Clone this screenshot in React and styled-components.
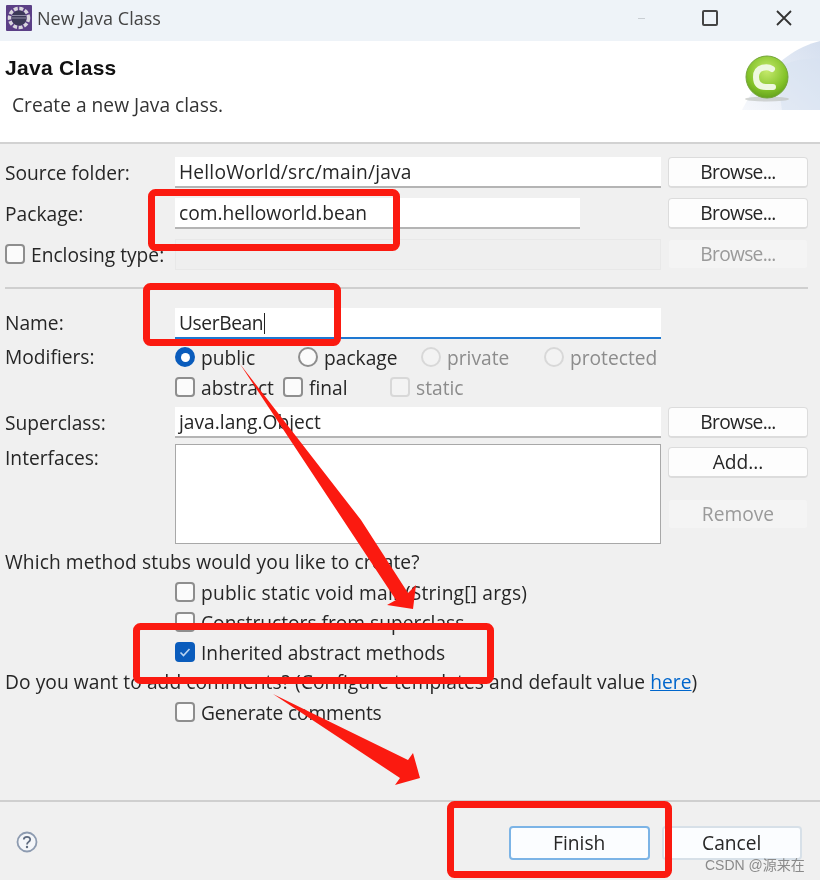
import React from 'react';
import styled, { createGlobalStyle } from 'styled-components';

const GlobalStyle = createGlobalStyle`
  html, body {
    margin: 0;
    padding: 0;
    background: #f0f0f0;
  }
`;

const FONT = '"Open Sans", "Noto Sans", sans-serif';

const Page = styled.div`
  position: relative;
  display: flex;
  flex-direction: column;
  width: 820px;
  height: 880px;
  overflow: hidden;
  background: #f0f0f0;
  color: #262626;
  font-family: ${FONT};
  font-size: 19.2px;
  filter: blur(0.45px);
`;

const TitleBar = styled.div`
  box-sizing: border-box;
  display: flex;
  align-items: center;
  height: 41px;
  padding: 0 0 5px 6px;
  background: #eef3f8;
  color: #444;
  flex: none;
`;

const TitleText = styled.span`
  margin-left: 5px;
  font-size: 18px;
`;

const WindowControls = styled.div`
  display: flex;
  align-items: center;
  margin-left: auto;
  padding-right: 28px;
`;

const Minimize = styled.div`
  width: 7px;
  height: 1px;
  margin-right: 57px;
  background: #c9ced3;
`;

const Maximize = styled.div`
  width: 12px;
  height: 12px;
  margin-right: 58px;
  border: 2px solid #444;
  border-radius: 2px;
`;

const Header = styled.div`
  display: flex;
  justify-content: space-between;
  align-items: flex-start;
  height: 101px;
  background: #fff;
  border-bottom: 2px solid #d2d2d2;
  flex: none;
`;

const HeaderText = styled.div`
  display: flex;
  flex-direction: column;
  padding: 15px 0 0 5px;
`;

const Heading = styled.div`
  font-family: "Liberation Sans", Arial, sans-serif;
  font-size: 21px;
  font-weight: 700;
  letter-spacing: 0.3px;
  color: #111;
`;

const SubHeading = styled.div`
  margin: 11px 0 0 7px;
  color: #333;
  font-size: 19.2px;
`;

const Form = styled.div`
  display: flex;
  flex-direction: column;
  flex: 1;
  padding: 13px 12px 0 5px;
`;

const Row = styled.div`
  display: grid;
  grid-template-columns: 170px 493px 140px;
  align-items: start;
  height: ${p => p.$height || 41}px;
  margin-top: ${p => p.$top || 0}px;
`;

const Label = styled.div`
  height: 31px;
  line-height: 31px;
  margin-top: ${p => p.$top || 0}px;
  white-space: nowrap;
`;

const Field = styled.div`
  box-sizing: border-box;
  width: ${p => p.$width || 486}px;
  height: ${p => p.$height || 31}px;
  padding-left: 4px;
  line-height: 29px;
  letter-spacing: ${p => p.$spacing || 0}px;
  background: ${p => (p.$disabled ? '#efefef' : '#fff')};
  border-bottom: 2px solid ${p => (p.$focused ? '#1f78d1' : '#b4b4b4')};
  ${p => p.$disabled && 'border: 1px solid #e8e8e8;'}
  ${p => p.$boxed && 'border: 1.5px solid #a8a8a8;'}
`;

const Caret = styled.span`
  display: inline-block;
  width: 1px;
  height: 21px;
  margin-left: 1px;
  vertical-align: -4px;
  background: #222;
`;

const Button = styled.div`
  box-sizing: border-box;
  width: 140px;
  height: 31px;
  line-height: 27px;
  text-align: center;
  background: ${p => (p.$disabled ? '#f4f4f4' : '#fdfdfd')};
  color: ${p => (p.$disabled ? '#9a9a9a' : '#262626')};
  border: 1px solid ${p => (p.$disabled ? '#f0f0f0' : '#dcdcdc')};
  border-bottom-width: 2px;
  border-radius: 4px;
  letter-spacing: ${p => (p.$tight ? '-0.7px' : '0')};
  margin-top: ${p => p.$top || 0}px;
  margin-bottom: ${p => p.$bottom || 0}px;
`;

const Separator = styled.div`
  height: 2px;
  margin-top: ${p => p.$top || 0}px;
  background: #cfcfcf;
  flex: none;
`;

const CheckRow = styled.div`
  display: flex;
  align-items: center;
  height: 30px;
  padding-left: ${p => (p.$flush ? 0 : 170)}px;
  white-space: nowrap;
`;

const ChoiceWrap = styled.div`
  display: flex;
  align-items: center;
  width: ${p => (p.$width ? `${p.$width}px` : 'auto')};
  color: ${p => (p.$disabled ? '#8c8c8c' : 'inherit')};
  letter-spacing: ${p => p.$spacing || 0}px;
`;

const Box = styled.span`
  box-sizing: border-box;
  display: flex;
  align-items: center;
  justify-content: center;
  width: 20px;
  height: 20px;
  margin-right: 6px;
  flex: none;
  border-radius: ${p => (p.$round ? '50%' : '4px')};
  border: 2px solid ${p => (p.$disabled ? '#d8d8d8' : '#8e8e8e')};
  background: ${p => (p.$disabled ? '#f3f3f3' : '#fbfbfb')};
  ${p => p.$checked && 'border-color: #0a5cbc; background: #0a5cbc;'}
`;

const RadioDot = styled.span`
  width: 9px;
  height: 9px;
  border-radius: 50%;
  background: #fff;
`;

const Plain = styled.div`
  height: 30px;
  line-height: 30px;
  white-space: nowrap;
  letter-spacing: ${p => p.$spacing || 0}px;
`;

const LinkText = styled.span`
  color: #0066cc;
  text-decoration: underline;
`;

const ButtonColumn = styled.div`
  display: flex;
  flex-direction: column;
`;

const Footer = styled.div`
  box-sizing: border-box;
  display: flex;
  align-items: flex-start;
  height: 80px;
  border-top: 2px solid #cfcfcf;
  padding: 24px 18px 0 16px;
  flex: none;
`;

const HelpSlot = styled.div`
  display: flex;
  margin-top: 5px;
`;

const DialogButton = styled.div`
  box-sizing: border-box;
  width: 141px;
  height: 34px;
  line-height: 30px;
  text-align: center;
  background: #fbfdff;
  border: 2px solid ${p => (p.$primary ? '#7cb4e6' : '#d7e0e8')};
  border-radius: 4px;
  margin-left: ${p => p.$left || 0}px;
`;

const Annotations = styled.svg`
  position: absolute;
  left: 0;
  top: 0;
  pointer-events: none;
`;

const Watermark = styled.div`
  position: absolute;
  left: 705px;
  top: 854px;
  font-family: "Liberation Sans", "Noto Sans CJK SC", sans-serif;
  font-size: 14px;
  color: #8a8a8a;
  white-space: nowrap;
`;

const Choice = ({ label, width, round, checked, disabled, spacing }) => (
  <ChoiceWrap $width={width} $disabled={disabled} $spacing={spacing}>
    <Box $round={round} $checked={checked} $disabled={disabled}>
      {checked && round && <RadioDot />}
      {checked && !round && (
        <svg width="14" height="14" viewBox="0 0 14 14">
          <path d="M2.5 7.5 L5.5 10.5 L11.5 4" fill="none" stroke="#b9d4f2" strokeWidth="1.6" />
        </svg>
      )}
    </Box>
    {label}
  </ChoiceWrap>
);

const AppIcon = () => (
  <svg width="26" height="26" viewBox="0 0 26 26">
    <rect width="26" height="26" rx="1" fill="#5b3f86" />
    <circle cx="13" cy="13" r="9.5" fill="none" stroke="#d9d6dd" strokeWidth="3.5" strokeDasharray="4 1.6" />
    <circle cx="13" cy="13" r="7.5" fill="#3d3a58" />
    <path d="M5.8 10.5 H20.2 M5.5 13 H20.5" stroke="#8e8aa4" strokeWidth="1" />
  </svg>
);

const CloseIcon = () => (
  <svg width="16" height="16" viewBox="0 0 16 16">
    <path d="M1 1 L15 15 M15 1 L1 15" stroke="#333" strokeWidth="1.8" fill="none" />
  </svg>
);

const ClassLogo = () => (
  <svg width="78" height="69" viewBox="0 0 78 69">
    <defs>
      <linearGradient id="wash" x1="0" y1="1" x2="1" y2="0">
        <stop offset="0" stopColor="#f6f8fc" />
        <stop offset="1" stopColor="#d5dfef" />
      </linearGradient>
      <radialGradient id="ball" cx="0.5" cy="0.35" r="0.7">
        <stop offset="0" stopColor="#c6ea6d" />
        <stop offset="0.65" stopColor="#84c32a" />
        <stop offset="1" stopColor="#5d9a18" />
      </radialGradient>
    </defs>
    <path d="M0 69 C14 40 44 8 78 0 V69 Z" fill="url(#wash)" />
    <path d="M34 28 C46 20 62 17 78 18 V69 H40 Z" fill="#d7e1f0" opacity="0.55" />
    <ellipse cx="25" cy="58" rx="22" ry="2.5" fill="#b9bcb8" opacity="0.6" />
    <circle cx="25" cy="36" r="21" fill="url(#ball)" stroke="#74a53b" strokeWidth="1" />
    <path
      d="M30 28 C26 25 14 25 14 36 C14 45 20 46 24 46 H31"
      fill="none"
      stroke="#eef8df"
      strokeWidth="6"
      strokeLinecap="round"
    />
  </svg>
);

const HelpIcon = () => (
  <svg width="22" height="22" viewBox="0 0 22 22">
    <circle cx="11" cy="11" r="9.5" fill="#f4f6f9" stroke="#8d9bb0" strokeWidth="1.8" />
    <path d="M7.8 8.6 C7.8 4.9 14.2 4.9 14.2 8.5 C14.2 11 11 10.8 11 13.4" fill="none" stroke="#5f6c80" strokeWidth="1.8" />
    <circle cx="11" cy="16" r="1.2" fill="#5f6c80" />
  </svg>
);

const RED = '#fb1a10';

const Overlay = () => (
  <Annotations width="820" height="880" viewBox="0 0 820 880">
    <rect x="151.5" y="192.5" width="245" height="55" rx="4" fill="none" stroke={RED} strokeWidth="7" />
    <rect x="146.5" y="286.5" width="191" height="56" rx="4" fill="none" stroke={RED} strokeWidth="7" />
    <rect x="136.5" y="626.5" width="354" height="54" rx="4" fill="none" stroke={RED} strokeWidth="7" />
    <rect x="450.5" y="804.5" width="218" height="70" rx="4" fill="none" stroke={RED} strokeWidth="7" />
    <polygon points="240,364 361,520 408,593 416,585 413,609 387,605 396,600" fill={RED} />
    <polygon points="273,694 408,760 413,753 420,778 395,785 400,778" fill={RED} />
  </Annotations>
);

export default function App() {
  return (
    <>
      <GlobalStyle />
      <Page>
        <TitleBar>
          <AppIcon />
          <TitleText>New Java Class</TitleText>
          <WindowControls>
            <Minimize />
            <Maximize />
            <CloseIcon />
          </WindowControls>
        </TitleBar>
        <Header>
          <HeaderText>
            <Heading>Java Class</Heading>
            <SubHeading>Create a new Java class.</SubHeading>
          </HeaderText>
          <ClassLogo />
        </Header>
        <Form>
          <Row>
            <Label>Source folder:</Label>
            <Field $spacing={0.2}>HelloWorld/src/main/java</Field>
            <Button $tight>Browse...</Button>
          </Row>
          <Row>
            <Label>Package:</Label>
            <Field $width={405}>com.helloworld.bean</Field>
            <Button $tight>Browse...</Button>
          </Row>
          <Row $height={41}>
            <CheckRow $flush>
              <Choice label="Enclosing type:" />
            </CheckRow>
            <Field $disabled />
            <Button $disabled $tight>Browse...</Button>
          </Row>
          <Separator $top={7} />
          <Row $height={34} $top={19}>
            <Label $top={-1}>Name:</Label>
            <Field $focused $spacing={-0.4}>
              UserBean
              <Caret />
            </Field>
          </Row>
          <Row $height={30}>
            <Plain>Modifiers:</Plain>
            <CheckRow $flush>
              <Choice round checked label="public" width={123} />
              <Choice round label="package" width={123} />
              <Choice round disabled label="private" width={123} />
              <Choice round disabled label="protected" />
            </CheckRow>
          </Row>
          <Row $height={30}>
            <div />
            <CheckRow $flush>
              <Choice label="abstract" width={108} />
              <Choice label="final" width={107} />
              <Choice disabled label="static" />
            </CheckRow>
          </Row>
          <Row $height={37} $top={5}>
            <Label>Superclass:</Label>
            <Field>java.lang.Object</Field>
            <Button $tight>Browse...</Button>
          </Row>
          <Row $height={103}>
            <Label $top={-2}>Interfaces:</Label>
            <Field $height={100} $boxed />
            <ButtonColumn>
              <Button $top={3} $bottom={21}>Add...</Button>
              <Button $disabled>Remove</Button>
            </ButtonColumn>
          </Row>
          <Plain $spacing={0.1}>Which method stubs would you like to create?</Plain>
          <CheckRow>
            <Choice label="public static void main(String[] args)" spacing={0.2} />
          </CheckRow>
          <CheckRow>
            <Choice label="Constructors from superclass" />
          </CheckRow>
          <CheckRow>
            <Choice checked label="Inherited abstract methods" />
          </CheckRow>
          <Plain $spacing={0.07}>
            Do you want to add comments? (Configure templates and default value <LinkText>here</LinkText>)
          </Plain>
          <CheckRow>
            <Choice label="Generate comments" spacing={-0.15} />
          </CheckRow>
        </Form>
        <Footer>
          <HelpSlot>
            <HelpIcon />
          </HelpSlot>
          <DialogButton $primary $left={471}>Finish</DialogButton>
          <DialogButton $left={12}>Cancel</DialogButton>
        </Footer>
        <Overlay />
        <Watermark>CSDN @源来在</Watermark>
      </Page>
    </>
  );
}
